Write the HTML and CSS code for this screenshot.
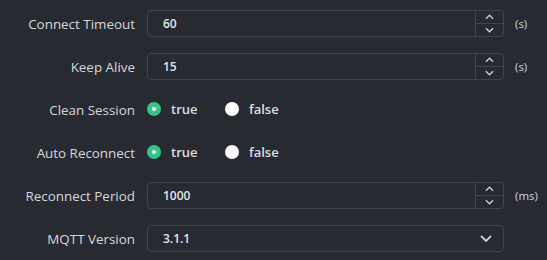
FILE: index.html
```html
<!DOCTYPE html>
<html>
<head>
<meta charset="utf-8">
<link rel="stylesheet" href="styles.css">
</head>
<body>
<div class="form">
  <label class="lbl">Connect Timeout</label>
  <div class="field num"><span class="val">60</span><div class="step"><span class="up"><svg viewBox="0 0 10 6"><path d="M1 5L5 1L9 5"/></svg></span><span class="down"><svg viewBox="0 0 10 6"><path d="M1 1L5 5L9 1"/></svg></span></div></div>
  <span class="unit">(s)</span>

  <label class="lbl">Keep Alive</label>
  <div class="field num"><span class="val">15</span><div class="step"><span class="up"><svg viewBox="0 0 10 6"><path d="M1 5L5 1L9 5"/></svg></span><span class="down"><svg viewBox="0 0 10 6"><path d="M1 1L5 5L9 1"/></svg></span></div></div>
  <span class="unit">(s)</span>

  <label class="lbl">Clean Session</label>
  <div class="radios"><span class="radio on"><i></i>true</span><span class="radio"><i></i>false</span></div>
  <span></span>

  <label class="lbl">Auto Reconnect</label>
  <div class="radios"><span class="radio on"><i></i>true</span><span class="radio"><i></i>false</span></div>
  <span></span>

  <label class="lbl">Reconnect Period</label>
  <div class="field num"><span class="val">1000</span><div class="step"><span class="up"><svg viewBox="0 0 10 6"><path d="M1 5L5 1L9 5"/></svg></span><span class="down"><svg viewBox="0 0 10 6"><path d="M1 1L5 5L9 1"/></svg></span></div></div>
  <span class="unit">(ms)</span>

  <label class="lbl">MQTT Version</label>
  <div class="field sel"><span class="val">3.1.1</span><svg class="chev" viewBox="0 0 12 7"><path d="M1 1L6 6L11 1"/></svg></div>
  <span></span>
</div>
</body>
</html>
```

FILE: styles.css
```css
html, body {
  margin: 0;
  padding: 0;
  background: #282a32;
  width: 547px;
  height: 260px;
  overflow: hidden;
}
body {
  font-family: "Open Sans", "Noto Sans", sans-serif;
  font-size: 13px;
  color: #d8d9dc;
}
.form {
  display: grid;
  grid-template-columns: 135px 357px auto;
  column-gap: 12px;
  row-gap: 16px;
  padding-top: 10px;
  grid-auto-rows: 27px;
  align-items: center;
}
.lbl {
  text-align: right;
  color: #d6d7da;
  font-size: 13.4px;
  white-space: nowrap;
}
.field {
  box-sizing: border-box;
  height: 27px;
  border: 1px solid #41434d;
  border-radius: 4px;
  display: flex;
  align-items: center;
  position: relative;
}
.val {
  flex: 1;
  padding-left: 15px;
  font-size: 12px;
  font-weight: 600;
  color: #e4e5e7;
}
.step {
  width: 27px;
  height: 100%;
  border-left: 1px solid #41434d;
  display: flex;
  flex-direction: column;
}
.step span {
  flex: 1;
  display: flex;
  align-items: center;
  justify-content: center;
}
.step .up {
  border-bottom: 1px solid #41434d;
}
.step svg {
  width: 9px;
  height: 6px;
  fill: none;
  stroke: #c9cad0;
  stroke-width: 1.6;
}
.unit {
  font-size: 11.5px;
  color: #c8d4e0;
  margin-left: -1px;
}
.radios {
  display: flex;
  align-items: center;
  margin-top: -2px;
}
.radio {
  display: flex;
  align-items: center;
  font-size: 13px;
  font-weight: 600;
  color: #dcdde0;
  width: 78px;
}
.radio i {
  box-sizing: border-box;
  width: 14px;
  height: 14px;
  border-radius: 50%;
  background: #ffffff;
  margin-right: 10px;
  flex: none;
}
.radio.on i {
  background: #34c388;
  position: relative;
}
.radio.on i::after {
  content: "";
  position: absolute;
  left: 5px;
  top: 5px;
  width: 4px;
  height: 4px;
  border-radius: 50%;
  background: #ffffff;
}
.sel .chev {
  width: 12px;
  height: 7px;
  margin-right: 11px;
  fill: none;
  stroke: #d0d1d6;
  stroke-width: 1.8;
}
```
